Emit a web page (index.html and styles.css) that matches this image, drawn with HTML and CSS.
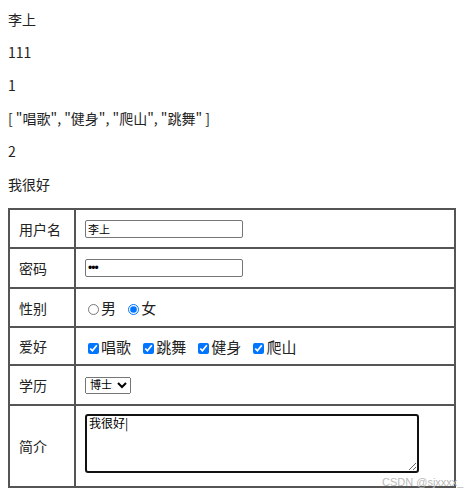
FILE: index.html
```html
<!DOCTYPE html>
<html lang="zh-CN">
<head>
    <meta charset="UTF-8">
    <meta name="viewport" content="width=device-width, initial-scale=1.0">
    <title>表单</title>
    <link rel="stylesheet" href="styles.css">
</head>
<body>
    <div class="output">
        <div class="line">李上</div>
        <div class="line">111</div>
        <div class="line">1</div>
        <div class="line">[ "唱歌", "健身", "爬山", "跳舞" ]</div>
        <div class="line">2</div>
        <div class="line">我很好</div>
    </div>

    <table class="form-table">
        <tr class="row row-first">
            <td class="label">用户名</td>
            <td class="field"><input type="text" class="text-input" value="李上"></td>
        </tr>
        <tr class="row">
            <td class="label">密码</td>
            <td class="field"><input type="password" class="text-input pwd" value="111"></td>
        </tr>
        <tr class="row row-short">
            <td class="label">性别</td>
            <td class="field">
                <label class="choice"><input type="radio" name="sex">男</label>
                <label class="choice"><input type="radio" name="sex" checked>女</label>
            </td>
        </tr>
        <tr class="row row-shorter">
            <td class="label">爱好</td>
            <td class="field">
                <label class="choice"><input type="checkbox" checked>唱歌</label>
                <label class="choice"><input type="checkbox" checked>跳舞</label>
                <label class="choice"><input type="checkbox" checked>健身</label>
                <label class="choice"><input type="checkbox" checked>爬山</label>
            </td>
        </tr>
        <tr class="row">
            <td class="label">学历</td>
            <td class="field">
                <select class="select">
                    <option>本科</option>
                    <option>硕士</option>
                    <option selected>博士</option>
                </select>
            </td>
        </tr>
        <tr class="row row-tall">
            <td class="label">简介</td>
            <td class="field field-top"><textarea class="intro">我很好|</textarea></td>
        </tr>
    </table>

    <div class="watermark">CSDN @sjxxxx_</div>
</body>
</html>
```

FILE: styles.css
```css
body {
    font-family: "Noto Sans CJK SC", "Noto Sans", sans-serif;
    font-size: 14px;
    color: #222;
    margin: 0 8px;
    background: #fff;
}

.output {
    padding-top: 3px;
}

.line {
    height: 33px;
    line-height: 33px;
}

.form-table {
    margin-top: 7px;
    width: 448px;
    border-collapse: collapse;
    border: 2px solid #555;
}

.form-table td {
    border: 2px solid #555;
    padding: 0 9px;
}

.row {
    height: 40px;
}

.row-first {
    height: 39px;
}

.row-short {
    height: 39px;
}

.row-shorter {
    height: 38px;
}

.row-tall {
    height: 82px;
}

.label {
    width: 46px;
}

.form-table .field-top {
    vertical-align: top;
    padding-top: 8px;
}

.text-input {
    width: 158px;
    height: 18px;
    box-sizing: border-box;
    font-size: 11px;
    font-family: "Noto Sans CJK SC", sans-serif;
    padding: 0 2px;
    border: 1px solid #767676;
    border-radius: 2px;
    margin: 0;
    display: block;
}

.pwd {
    font-family: "Liberation Sans", sans-serif;
    font-size: 12px;
    letter-spacing: -1px;
}

.choice {
    font-size: 15px;
    margin-right: 6px;
}

.choice input {
    margin: 0 2px 0 3px;
    width: 11px;
    height: 11px;
    vertical-align: -1px;
}

.select {
    font-size: 11px;
    height: 17px;
    width: 46px;
    padding: 0;
    margin: 0;
    display: block;
}

.intro {
    display: block;
    width: 334px;
    height: 59px;
    box-sizing: border-box;
    margin: 0;
    padding: 0 2px;
    border: 2px solid #111;
    border-radius: 3px;
    font-family: "Noto Sans CJK SC", sans-serif;
    font-size: 12px;
    line-height: 14px;
    resize: both;
}

.watermark {
    position: absolute;
    left: 382px;
    top: 476px;
    font-family: "Liberation Sans", sans-serif;
    font-size: 11px;
    color: #bbb;
}
```
